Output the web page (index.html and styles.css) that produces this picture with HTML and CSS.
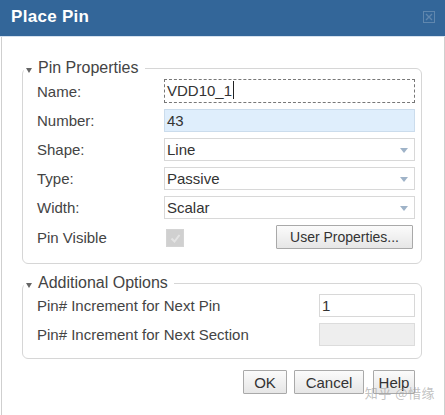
FILE: index.html
```html
<!DOCTYPE html>
<html>
<head>
<meta charset="utf-8">
<link rel="stylesheet" href="styles.css">
</head>
<body>
<div class="dialog">
  <div class="titlebar">
    <span class="title">Place Pin</span>
    <svg class="close" width="12" height="12" viewBox="0 0 12 12"><rect x="0.5" y="0.5" width="11" height="11" fill="none" stroke="#7f9dbd" stroke-width="1"/><path d="M3 3 L9 9 M9 3 L3 9" stroke="#7f9dbd" stroke-width="1.4"/></svg>
  </div>
  <div class="content">
    <fieldset class="group">
      <legend class="legend"><span class="tri"></span>Pin Properties</legend>
      <div class="form">
        <span class="label">Name:</span>
        <div class="field focus">VDD10_1<span class="caret"></span></div>
        <span class="label">Number:</span>
        <div class="field blue">43</div>
        <span class="label">Shape:</span>
        <div class="field select">Line<span class="arrow"></span></div>
        <span class="label">Type:</span>
        <div class="field select">Passive<span class="arrow"></span></div>
        <span class="label">Width:</span>
        <div class="field select">Scalar<span class="arrow"></span></div>
        <span class="label">Pin Visible</span>
        <div class="visrow">
          <span class="check"><svg width="13" height="13" viewBox="0 0 13 13"><path d="M2.5 6.5 L5.5 9.5 L10.5 3" fill="none" stroke="#e4e4e4" stroke-width="2"/></svg></span>
          <button class="btn small">User Properties...</button>
        </div>
      </div>
    </fieldset>
    <fieldset class="group second">
      <legend class="legend"><span class="tri"></span>Additional Options</legend>
      <div class="form opts">
        <span class="label">Pin# Increment for Next Pin</span>
        <div class="field">1</div>
        <span class="label">Pin# Increment for Next Section</span>
        <div class="field disabled"></div>
      </div>
    </fieldset>
    <div class="buttons">
      <button class="btn ok">OK</button>
      <button class="btn cancel">Cancel</button>
      <button class="btn help">Help</button>
    </div>
    <div class="watermark">知乎 @惜缘</div>
  </div>
</div>
</body>
</html>
```
FILE: styles.css
```css
* { box-sizing: border-box; }
html, body { margin: 0; padding: 0; background: #ffffff; }
body {
  font-family: "Liberation Sans", Arial, sans-serif;
  font-size: 15px;
  color: #444444;
  width: 445px;
  height: 415px;
  overflow: hidden;
}
.dialog { width: 445px; height: 415px; display: flex; flex-direction: column; }
.titlebar {
  height: 37px;
  background: #336699;
  border-bottom: 1px solid #d5e1ee;
  display: flex;
  align-items: center;
  justify-content: space-between;
  padding: 0 11px 2px 11px;
}
.title { color: #ffffff; font-weight: bold; font-size: 17px; letter-spacing: 0.3px; }
.close { opacity: 0.6; margin-right: -1px; }
.content {
  flex: 1;
  border-left: 1px solid #cfcfcf;
  border-right: 1px solid #cfcfcf;
  margin-left: 1px;
  padding: 22px 22px 0 20px;
  position: relative;
}
.group {
  margin: 0;
  padding: 0 6px 14px 14px;
  border: 1px solid #d6d6d6;
  border-radius: 6px;
  min-width: 0;
}
.second { margin-top: 10px; padding-bottom: 12px; }
.legend {
  font-size: 16px;
  color: #444444;
  padding: 0 6px 0 0;
  margin-left: -13px;
  display: flex;
  align-items: center;
  line-height: 18px;
}
.tri {
  width: 0; height: 0;
  border-left: 3.5px solid transparent;
  border-right: 3.5px solid transparent;
  border-top: 5px solid #666666;
  margin: 5px 6px 0 2px;
}
.form {
  display: grid;
  grid-template-columns: 127px 1fr;
  row-gap: 6px;
  align-items: center;
  margin-top: 2px;
}
.opts { grid-template-columns: 1fr 96px; row-gap: 6px; margin-top: 2px; }
.label { color: #444444; white-space: nowrap; }
.field {
  height: 23px;
  border: 1px solid #d8d8d8;
  padding: 0 2px;
  line-height: 21px;
  color: #333333;
  background: #ffffff;
  position: relative;
  white-space: nowrap;
}
.focus { border: 1px dashed #777777; height: 24px; }
.caret {
  display: inline-block;
  width: 1px; height: 18px;
  background: #222;
  vertical-align: -3px;
  margin-left: 1px;
}
.blue { background: #dfeefc; border-color: #cbdcec; }
.arrow {
  position: absolute;
  right: 6px; top: 9px;
  width: 0; height: 0;
  border-left: 4px solid transparent;
  border-right: 4px solid transparent;
  border-top: 5px solid #9fb3c8;
}
.disabled { background: #eeeeee; border-color: #dcdcdc; }
.visrow {
  display: flex;
  justify-content: space-between;
  align-items: center;
  padding-left: 2px;
  height: 24px;
}
.check {
  width: 18px; height: 18px;
  border: 1px solid #d4d4d4;
  background: #d0d0d0;
  display: flex; align-items: center; justify-content: center;
  margin-top: 2px;
}
.btn {
  font-family: "Liberation Sans", Arial, sans-serif;
  font-size: 15px;
  color: #333333;
  height: 24px;
  border: 1px solid #a9a9a9;
  background: linear-gradient(#fbfbfb, #e6e6e6);
  padding: 0;
  border-radius: 1px;
}
.small { font-size: 14px; width: 137px; margin-right: 2px; }
.buttons {
  display: flex;
  justify-content: flex-end;
  gap: 7px;
  margin-top: 11px;
  padding-right: 7px;
}
.ok { width: 44px; }
.cancel { width: 70px; margin-right: 2px; }
.help { width: 42px; }
.watermark {
  position: absolute;
  right: 9px;
  bottom: 13px;
  font-family: "Noto Sans CJK SC", sans-serif;
  font-size: 13px;
  color: rgba(160,160,160,0.65);
  letter-spacing: 0.5px;
  pointer-events: none;
}
```
